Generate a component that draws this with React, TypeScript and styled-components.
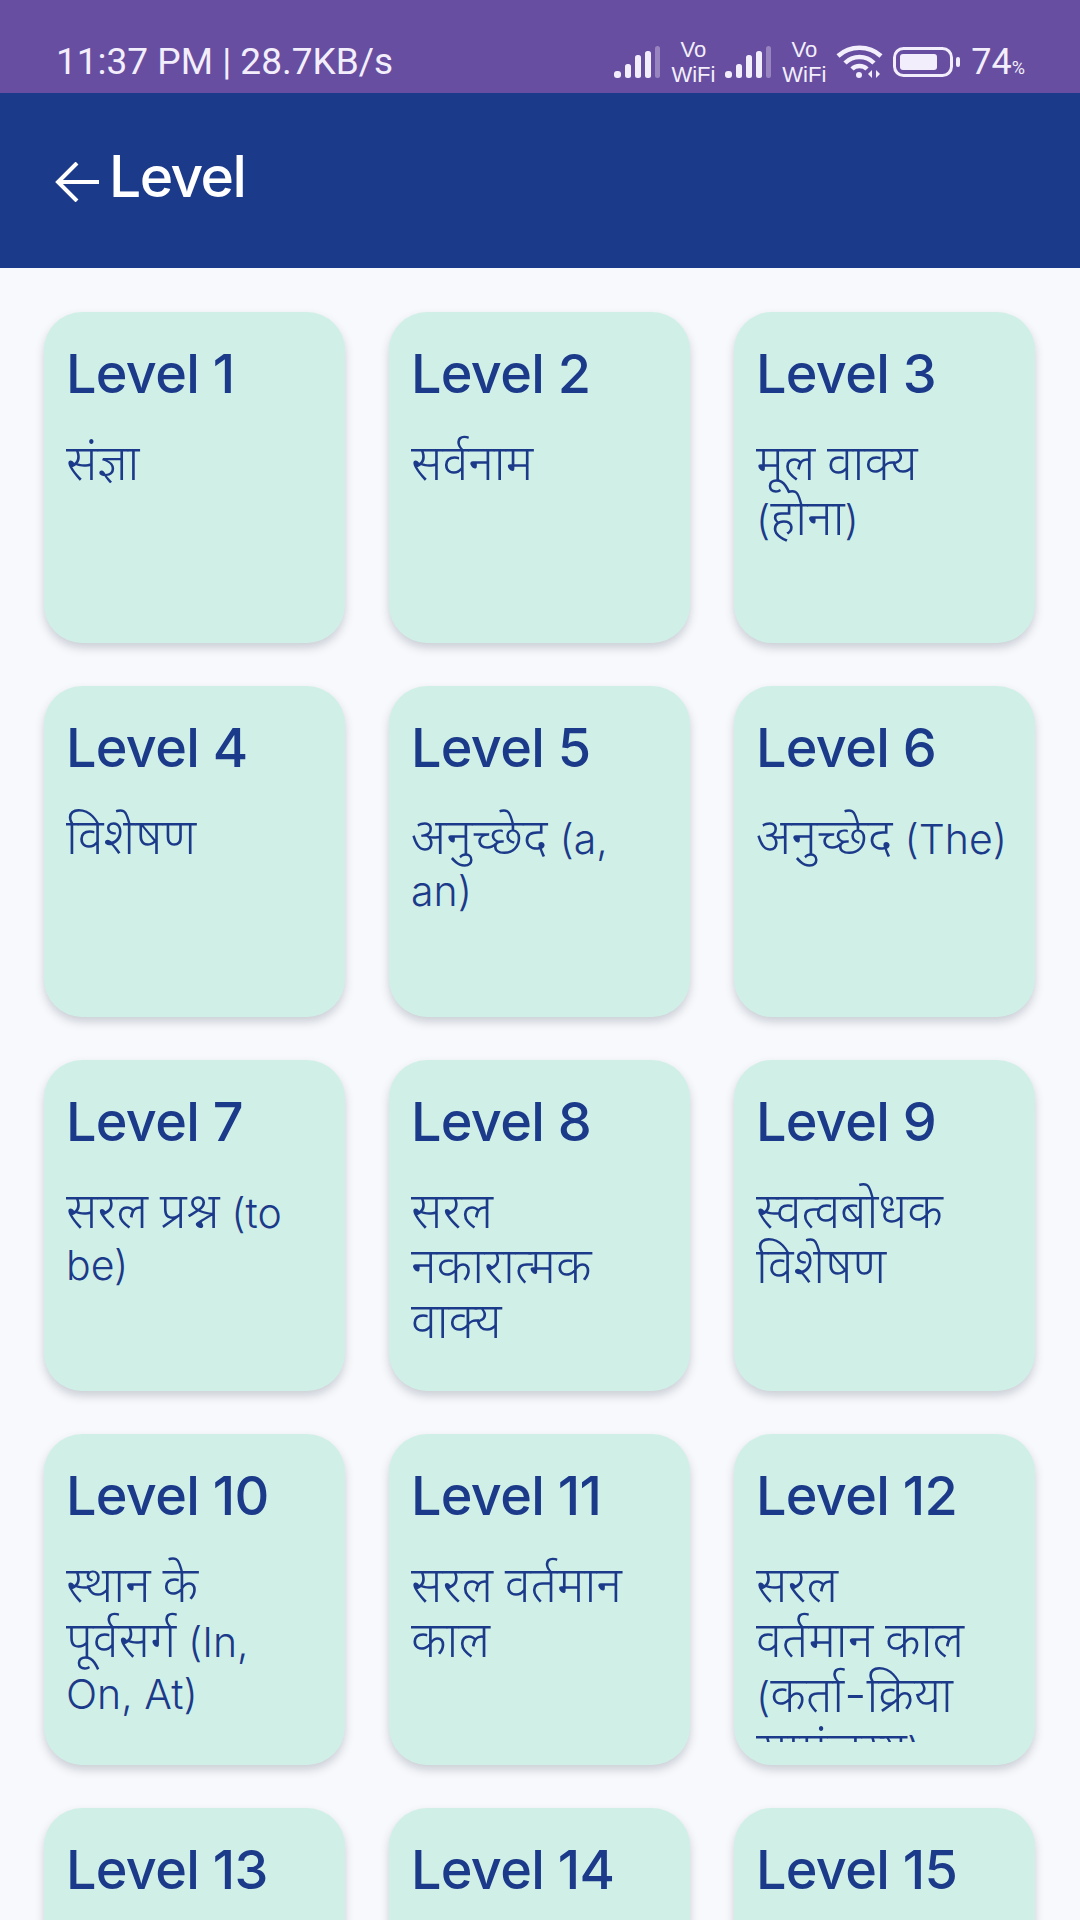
import React from 'react'
import styled, { createGlobalStyle } from 'styled-components'

const BLUE = '#1c3a8a'
const FONT = `Inter, "Noto Sans", "Noto Sans Devanagari", "Lohit Devanagari", sans-serif`

const GlobalStyle = createGlobalStyle`
    html, body {
        margin: 0;
        padding: 0;
        background: #f8f9fc;
    }
`

const Screen = styled.div`
    width: 1080px;
    height: 1920px;
    overflow: hidden;
    display: flex;
    flex-direction: column;
    background: #f8f9fc;
    font-family: ${FONT};
`

const StatusBar = styled.div`
    height: 93px;
    flex: none;
    box-sizing: border-box;
    padding: 30px 55px 0 56px;
    display: flex;
    align-items: center;
    justify-content: space-between;
    background: #674ea0;
    color: #f3eefb;
`

const StatusText = styled.div`
    font-family: Roboto, sans-serif;
    font-size: 37px;
`

const StatusIcons = styled.div`
    display: flex;
    align-items: center;
    gap: 10px;
`

const VoWifi = styled.div`
    font-family: 'Liberation Sans', sans-serif;
    font-size: 22px;
    line-height: 25px;
    text-align: center;
`

const Percent = styled.div`
    font-family: Roboto, sans-serif;
    font-size: 36px;
    & small {
        font-size: 18px;
    }
`

const AppBar = styled.div`
    height: 175px;
    flex: none;
    box-sizing: border-box;
    padding: 0 0 9px 55px;
    display: flex;
    align-items: center;
    gap: 10px;
    background: ${BLUE};
    color: #fff;
`

const ArrowWrap = styled.div`
    display: flex;
    margin-top: 12px;
`

const AppTitle = styled.div`
    font-size: 57px;
    font-weight: 500;
    letter-spacing: -1.6px;
`

const Grid = styled.div`
    display: grid;
    grid-template-columns: repeat(3, 301px);
    grid-auto-rows: 331px;
    column-gap: 44px;
    row-gap: 43px;
    padding: 44px 44px 0;
`

const Card = styled.div`
    box-sizing: border-box;
    padding: 26px 22px 23px 22px;
    border-radius: 38px;
    overflow: hidden;
    display: flex;
    flex-direction: column;
    background: #d0f0e7;
    color: ${BLUE};
    box-shadow: 0 5px 10px rgba(40, 60, 80, 0.22);
`

const Title = styled.div`
    flex: none;
    font-size: 54px;
    line-height: 72px;
    font-weight: 500;
    letter-spacing: -0.7px;
    white-space: nowrap;
`

const Subtitle = styled.div`
    flex: 1;
    min-height: 0;
    overflow: hidden;
    margin-top: 13px;
    padding-top: 12px;
    font-size: 41px;
    font-weight: 300;
    line-height: 55px;
    white-space: nowrap;
`

const SubtitleLine = styled.div`
    height: 55px;
`

const Hindi = styled.span`
    font-size: 49px;
    font-weight: 300;
    word-spacing: -2px;
`

const Signal = () => (
    <svg width="47" height="32" viewBox="0 0 47 32">
        <rect x="0" y="25" width="7" height="7" rx="3" fill="currentColor" />
        <rect x="11" y="18" width="6" height="14" rx="2.5" fill="currentColor" />
        <rect x="21" y="9" width="6" height="23" rx="2.5" fill="currentColor" />
        <rect x="31" y="5" width="6" height="27" rx="2.5" fill="currentColor" />
        <rect x="41" y="0" width="5" height="32" rx="2.5" fill="currentColor" opacity="0.35" />
    </svg>
)

const WifiIcon = () => (
    <svg width="47" height="34" viewBox="0 0 47 34" fill="none" stroke="currentColor" strokeWidth="4.5">
        <path d="M2 11 C14 0 33 0 45 11" />
        <path d="M9 18 C17 10 30 10 38 18" />
        <path d="M16 24 C20 20 27 20 31 24" />
        <circle cx="23" cy="30" r="3" fill="currentColor" stroke="none" />
        <path d="M36 25 l-4 4 l4 4 z M40 25 l4 4 l-4 4 z" fill="currentColor" stroke="none" />
    </svg>
)

const BatteryIcon = () => (
    <svg width="68" height="30" viewBox="0 0 68 30" fill="none">
        <rect x="1.5" y="1.5" width="57" height="27" rx="9" stroke="currentColor" strokeWidth="3" />
        <rect x="7" y="7" width="37" height="16" rx="3" fill="currentColor" />
        <rect x="63" y="10" width="4" height="10" rx="2" fill="currentColor" />
    </svg>
)

const BackArrow = () => (
    <svg width="44" height="40" viewBox="0 0 44 40" fill="none" stroke="#fff" strokeWidth="4">
        <path d="M44 20 H3" />
        <path d="M22 1 L3 20 L22 39" />
    </svg>
)

const LEVELS: string[][] = [
    ['संज्ञा'],
    ['सर्वनाम'],
    ['मूल वाक्य', '(होना)'],
    ['विशेषण'],
    ['अनुच्छेद (a,', 'an)'],
    ['अनुच्छेद (The)'],
    ['सरल प्रश्न (to', 'be)'],
    ['सरल', 'नकारात्मक', 'वाक्य'],
    ['स्वत्वबोधक', 'विशेषण'],
    ['स्थान के', 'पूर्वसर्ग (In,', 'On, At)'],
    ['सरल वर्तमान', 'काल'],
    ['सरल', 'वर्तमान काल', '(कर्ता-क्रिया', 'सामंजस्य)'],
    [],
    [],
    [],
]

// the Devanagari runs sit larger than the latin ones in the same line
const renderLine = (line: string) =>
    line.split(/([\u0900-\u097F][\u0900-\u097F\s-]*)/).map((part, i) =>
        /[\u0900-\u097F]/.test(part) ? <Hindi key={i}>{part}</Hindi> : part,
    )

export default function App() {
    return (
        <Screen>
            <GlobalStyle />
            <StatusBar>
                <StatusText>11:37 PM | 28.7KB/s</StatusText>
                <StatusIcons>
                    <Signal />
                    <VoWifi>
                        Vo
                        <br />
                        WiFi
                    </VoWifi>
                    <Signal />
                    <VoWifi>
                        Vo
                        <br />
                        WiFi
                    </VoWifi>
                    <WifiIcon />
                    <BatteryIcon />
                    <Percent>
                        74<small>%</small>
                    </Percent>
                </StatusIcons>
            </StatusBar>
            <AppBar>
                <ArrowWrap>
                    <BackArrow />
                </ArrowWrap>
                <AppTitle>Level</AppTitle>
            </AppBar>
            <Grid>
                {LEVELS.map((lines, i) => (
                    <Card key={i}>
                        <Title>Level {i + 1}</Title>
                        <Subtitle>
                            {lines.map((line, j) => (
                                <SubtitleLine key={j}>{renderLine(line)}</SubtitleLine>
                            ))}
                        </Subtitle>
                    </Card>
                ))}
            </Grid>
        </Screen>
    )
}
